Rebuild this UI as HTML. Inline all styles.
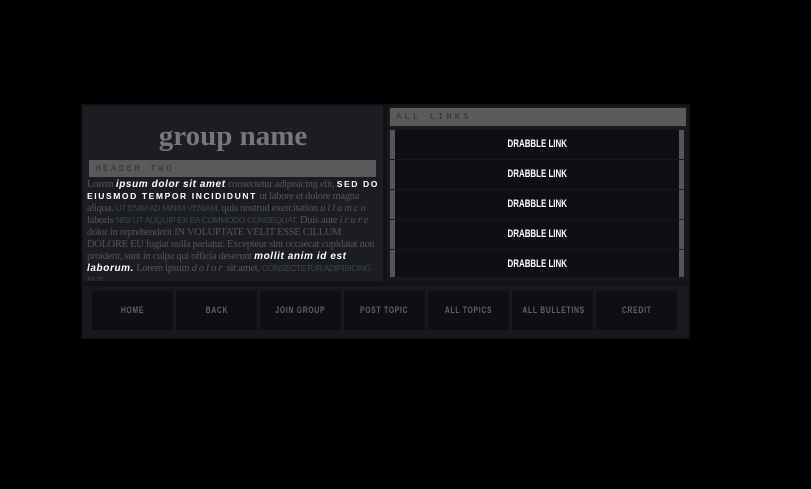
<!DOCTYPE html>
<html><head><meta charset="utf-8"><style>
*{margin:0;padding:0;box-sizing:border-box}
body{width:811px;height:489px;background:#000;position:relative;overflow:hidden;font-family:"Liberation Serif",serif}
.wrap{position:absolute;left:81px;top:104px;width:609px;height:235px;background:#111216}
.left{position:absolute;left:83px;top:106px;width:300px;height:175px;background:#1c1d22;overflow:hidden}
.title{position:absolute;left:0;width:300px;top:14px;text-align:center;font:bold 29px "Liberation Serif",serif;color:#777}
.h2{position:absolute;left:6px;top:54px;width:287px;height:17px;background:#5a5a5a;font:9px "Liberation Mono",monospace;color:#333;letter-spacing:2.5px;padding:4px 0 0 6px}
.body{position:absolute;left:4px;top:73px;width:292px;font-size:10.5px;line-height:12px;color:#555;letter-spacing:-0.3px}
.b{font:bold italic 10px "Liberation Sans",sans-serif;color:#fff;letter-spacing:0.6px}
.c{font:bold 8.5px "Liberation Sans",sans-serif;color:#fff;letter-spacing:1.6px}
.n{font:8.5px "Liberation Sans",sans-serif;color:#3e4550;letter-spacing:-0.4px}
.i{font-style:italic;letter-spacing:2px;color:#555}
.right{position:absolute;left:387px;top:106px;width:301px;height:175px;background:#18191d}
.all{position:absolute;left:3px;top:2px;width:296px;height:18px;background:#5b5b5b;font:9px "Liberation Mono",monospace;color:#333;letter-spacing:3px;padding:4px 0 0 6px}
.link{position:absolute;left:3px;width:294px;height:29px;background:#0f0e12;border-left:5px solid #555;border-right:5px solid #555;text-align:center}
.link span{display:inline-block;font:bold 11px "Liberation Sans",sans-serif;color:#fff;line-height:29px;transform:scaleX(0.72)}
.nav{position:absolute;left:83px;top:286px;width:605px;height:51px;background:#18191d}
.btns{position:absolute;left:9px;top:5px;display:flex;gap:3px}
.btn{width:81px;height:39px;background:#0f0e12;text-align:center;white-space:nowrap}
.btn span{display:inline-block;font:bold 9px "Liberation Sans",sans-serif;line-height:39px;color:#5c6470;letter-spacing:1px;transform:scaleX(0.75)}
</style></head><body>
<div class="wrap"></div>
<div class="left">
<div class="title">group name</div>
<div class="h2">HEADER TWO</div>
<div class="body">Lorem <span class="b">ipsum dolor sit amet</span> consectetur adipisicing elit, <span class="c">SED DO EIUSMOD TEMPOR INCIDIDUNT</span> ut labore et dolore magna aliqua. <span class="n">UT ENIM AD MINIM VENIAM,</span> quis nostrud exercitation <span class="i">ullamco</span> laboris <span class="n">NISI UT ALIQUIP EX EA COMMODO CONSEQUAT.</span> Duis aute <span class="i">irure</span> dolor in reprehenderit IN VOLUPTATE VELIT ESSE CILLUM DOLORE EU fugiat nulla pariatur. Excepteur sint occaecat cupidatat non proident, sunt in culpa qui officia deserunt <span class="b">mollit anim id est laborum.</span> Lorem ipsum <span class="i">dolor</span> sit amet, <span class="n">CONSECTETUR ADIPISICING ELIT</span></div>
</div>
<div class="right">
<div class="all">ALL LINKS</div>
<div class="link" style="top:24px"><span>DRABBLE LINK</span></div>
<div class="link" style="top:54px"><span>DRABBLE LINK</span></div>
<div class="link" style="top:84px"><span>DRABBLE LINK</span></div>
<div class="link" style="top:114px"><span>DRABBLE LINK</span></div>
<div class="link" style="top:144px;height:27px"><span>DRABBLE LINK</span></div>
</div>
<div class="nav"><div class="btns">
<div class="btn"><span>HOME</span></div><div class="btn"><span>BACK</span></div><div class="btn"><span>JOIN GROUP</span></div><div class="btn"><span>POST TOPIC</span></div><div class="btn"><span>ALL TOPICS</span></div><div class="btn"><span>ALL BULLETINS</span></div><div class="btn"><span>CREDIT</span></div>
</div></div>
</body></html>
